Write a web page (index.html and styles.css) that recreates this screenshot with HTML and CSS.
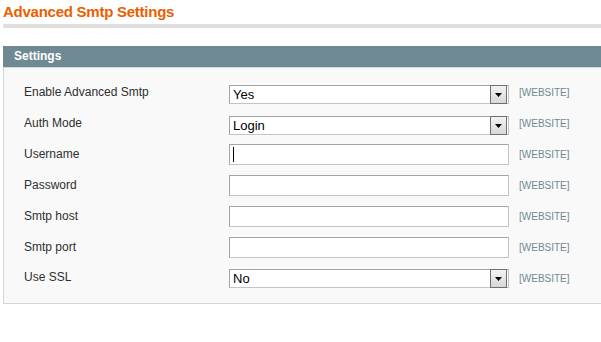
FILE: index.html
```html
<!DOCTYPE html>
<html>
<head>
<meta charset="utf-8">
<title>Advanced Smtp Settings</title>
<link rel="stylesheet" href="styles.css">
</head>
<body>
<div class="page">
  <h1 class="page-title">Advanced Smtp Settings</h1>
  <div class="title-rule"></div>
  <section class="section">
    <h2 class="section-head">Settings</h2>
    <div class="fieldset">
      <div class="row">
        <label class="label">Enable Advanced Smtp</label>
        <div class="control">
          <div class="select"><span class="select-value">Yes</span><span class="select-btn"><svg width="7" height="4" viewBox="0 0 7 4"><path d="M0 0H7L3.5 4Z" fill="#000"/></svg></span></div>
        </div>
        <span class="scope">[WEBSITE]</span>
      </div>
      <div class="row">
        <label class="label">Auth Mode</label>
        <div class="control">
          <div class="select"><span class="select-value">Login</span><span class="select-btn"><svg width="7" height="4" viewBox="0 0 7 4"><path d="M0 0H7L3.5 4Z" fill="#000"/></svg></span></div>
        </div>
        <span class="scope">[WEBSITE]</span>
      </div>
      <div class="row">
        <label class="label">Username</label>
        <div class="control">
          <span class="input-wrap"><input class="input" type="text"><span class="caret"></span></span>
        </div>
        <span class="scope">[WEBSITE]</span>
      </div>
      <div class="row">
        <label class="label">Password</label>
        <div class="control">
          <input class="input" type="password">
        </div>
        <span class="scope">[WEBSITE]</span>
      </div>
      <div class="row">
        <label class="label">Smtp host</label>
        <div class="control">
          <input class="input" type="text">
        </div>
        <span class="scope">[WEBSITE]</span>
      </div>
      <div class="row">
        <label class="label">Smtp port</label>
        <div class="control">
          <input class="input" type="text">
        </div>
        <span class="scope">[WEBSITE]</span>
      </div>
      <div class="row row-last">
        <label class="label">Use SSL</label>
        <div class="control">
          <div class="select"><span class="select-value">No</span><span class="select-btn"><svg width="7" height="4" viewBox="0 0 7 4"><path d="M0 0H7L3.5 4Z" fill="#000"/></svg></span></div>
        </div>
        <span class="scope">[WEBSITE]</span>
      </div>
    </div>
  </section>
</div>
</body>
</html>
```
FILE: styles.css
```css
html, body {
  margin: 0;
  padding: 0;
  background: #fff;
}
body {
  font-family: Arial, "Liberation Sans", sans-serif;
  font-size: 12px;
  color: #2f2f2f;
}
.page {
  padding: 3px 0 0 3px;
}
.page-title {
  margin: 0;
  font-size: 15px;
  line-height: 18px;
  font-weight: bold;
  color: #eb5e00;
  letter-spacing: -0.25px;
}
.title-rule {
  height: 4px;
  margin-top: 3px;
  background: #dfdfdf;
}
.section {
  margin-top: 18px;
}
.section-head {
  margin: 0;
  height: 21px;
  box-sizing: border-box;
  padding: 3px 0 0 11px;
  background: #6f8992;
  color: #fff;
  font-size: 12px;
  line-height: 15px;
  font-weight: bold;
}
.fieldset {
  border: 1px solid #d6d6d6;
  border-right: none;
  background: #f9f9f9;
  padding: 14px 0 4px 20px;
}
.row {
  display: flex;
  align-items: flex-start;
  height: 31px;
}
.label {
  width: 205px;
  padding-top: 3px;
  line-height: 15px;
  font-size: 12px;
  color: #2f2f2f;
}
.control {
  width: 280px;
}
.select {
  display: flex;
  align-items: stretch;
  height: 19px;
  box-sizing: border-box;
  margin-top: 3px;
  border: 1px solid;
  border-color: #a5a5a5 #c4c4c4 #c4c4c4 #a5a5a5;
  background: #fff;
}
.row-last .select {
  margin-top: 1px;
}
.row-last .label {
  padding-top: 2px;
}
.select-value {
  flex: 1;
  padding-left: 3px;
  font-size: 13px;
  line-height: 17px;
  color: #000;
}
.select-btn {
  width: 17px;
  margin: -1px 1px -1px 0;
  box-sizing: border-box;
  border: 1px solid #707070;
  background: linear-gradient(#f2f2f2, #d8d8d8);
  display: flex;
  align-items: center;
  justify-content: center;
  padding-top: 1px;
}
.select-btn svg {
  display: block;
}
.input-wrap {
  position: relative;
  display: block;
}
.input {
  display: block;
  width: 280px;
  height: 21px;
  box-sizing: border-box;
  margin: 0;
  padding: 0 3px;
  border: 1px solid;
  border-color: #a5a5a5 #c4c4c4 #c4c4c4 #a5a5a5;
  background: #fff;
  font-family: Arial, "Liberation Sans", sans-serif;
  font-size: 13px;
  outline: none;
}
.caret {
  position: absolute;
  left: 4px;
  top: 3px;
  width: 1px;
  height: 15px;
  background: #000;
}
.scope {
  margin-left: 10px;
  padding-top: 5px;
  font-size: 10px;
  line-height: 12px;
  color: #6f8992;
}
```
